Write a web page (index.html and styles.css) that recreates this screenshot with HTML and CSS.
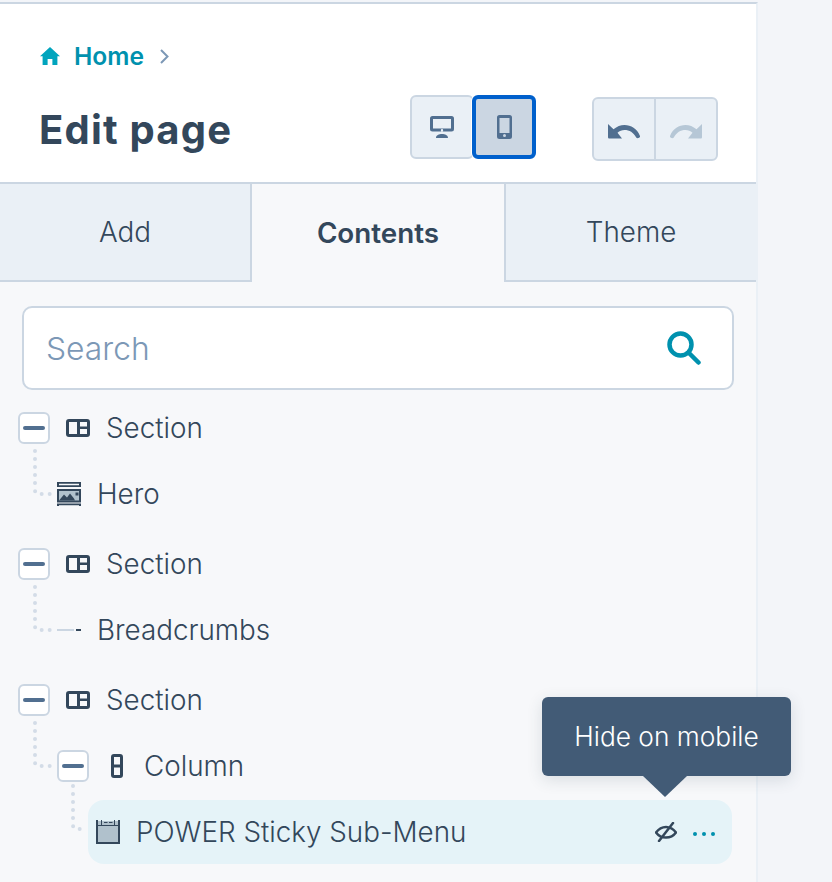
FILE: index.html
```html
<!DOCTYPE html>
<html lang="en">
<head>
<meta charset="utf-8">
<title>Edit page</title>
<link rel="stylesheet" href="styles.css">
</head>
<body>
<div class="panel">
  <header class="head">
    <nav class="crumb">
      <svg class="home-ico" viewBox="0 0 20 18"><path d="M10 0 20 9.2h-2.6V18h-5v-6H7.600v6h-5V9.200H0z"/></svg>
      <a class="home-link">Home</a>
      <svg class="chev" viewBox="0 0 9 15"><path d="M1 1l6.500 6.500L1 14"/></svg>
    </nav>
    <div class="title-row">
      <h1 class="title">Edit page</h1>
      <div class="device-group">
        <button class="btn btn-desktop"><svg class="ico" viewBox="0 0 24 24"><path fill-rule="evenodd" d="M2.500 1h19A2.500 2.500 0 0 1 24 3.500V14a2.500 2.500 0 0 1-2.500 2.500h-19A2.500 2.500 0 0 1 0 14V3.500A2.500 2.500 0 0 1 2.500 1zM3 4v9.500h18V4zM12 14a1.200 1.200 0 1 0 0 2.400 1.200 1.200 0 0 0 0-2.400zM6 23c0-3 3-4 6-4s6 1 6 4z"/></svg></button>
        <button class="btn btn-active"><svg class="ico-phone" viewBox="0 0 15 24"><path fill-rule="evenodd" d="M2.500 0h10A2.500 2.500 0 0 1 15 2.500v19a2.500 2.500 0 0 1-2.500 2.500h-10A2.500 2.500 0 0 1 0 21.500v-19A2.500 2.500 0 0 1 2.500 0zM2.500 3v15h10V3zM7.500 19a1.500 1.500 0 1 0 0 3 1.500 1.500 0 0 0 0-3z"/></svg></button>
      </div>
      <div class="history-group">
        <button class="hbtn"><svg class="ico-hist" viewBox="0 0 32 16"><path d="M0 0l5.500 5.200C9 2.500 12.500 1 16.500 1 23 1 29 4.500 32 12c.5 1.800-2.800 3-3.800 1.400C25.500 8.500 21.500 6 16.500 6c-2.700 0-5 1-7 2.800L14 14.500H1.500C.5 14.500 0 14 0 13z"/></svg></button>
        <button class="hbtn"><svg class="ico-hist ico-dim" viewBox="0 0 32 16"><path d="M32 0l-5.500 5.200C23 2.500 19.500 1 15.500 1 9 1 3 4.500 0 12c-.5 1.800 2.800 3 3.800 1.400C6.500 8.500 10.500 6 15.500 6c2.700 0 5 1 7 2.800L18 14.500h12.500c1 0 1.500-.5 1.500-1.500z"/></svg></button>
      </div>
    </div>
  </header>

  <div class="tabs">
    <div class="tab">Add</div>
    <div class="tab tab-on">Contents</div>
    <div class="tab tab-last">Theme</div>
  </div>

  <div class="body">
    <div class="search">
      <span class="search-ph">Search</span>
      <svg class="search-ico" viewBox="0 0 34 34"><circle cx="13.500" cy="13.500" r="11" /><path d="M21.500 21.500 31.500 31.500"/></svg>
    </div>

    <div class="tree">
      <section class="group">
        <div class="row">
          <span class="toggle"></span>
          <svg class="sec-ico" viewBox="0 0 24 18"><path fill-rule="evenodd" d="M3 0h18a3 3 0 0 1 3 3v12a3 3 0 0 1-3 3H3a3 3 0 0 1-3-3V3a3 3 0 0 1 3-3zM3 3v12h8V3zm11 0v4.500h7V3zm0 7v5h7v-5z"/></svg>
          <span class="label">Section</span>
        </div>
        <div class="row row-leaf">
          <svg class="link" viewBox="0 0 24 50"><path d="M2 2V41Q2 45 6 45H24"/></svg>
          <svg class="mod-ico" viewBox="0 0 24 24"><path fill-rule="evenodd" d="M0 0h24v5H0zM2 1.700v1.600h20V1.700zM0 7h24v13.500H0zM0 21.500h24V24h-2v-.8H2v.8H0z"/><path class="hero-fill" d="M2 9h20v9.500H2z"/><path class="hero-mtn" d="M2 18.500l5-6 3 3 3-4 4 5 1 2zM18.500 10.500h3v3h-3z"/></svg>
          <span class="label">Hero</span>
        </div>
      </section>

      <section class="group">
        <div class="row">
          <span class="toggle"></span>
          <svg class="sec-ico" viewBox="0 0 24 18"><path fill-rule="evenodd" d="M3 0h18a3 3 0 0 1 3 3v12a3 3 0 0 1-3 3H3a3 3 0 0 1-3-3V3a3 3 0 0 1 3-3zM3 3v12h8V3zm11 0v4.500h7V3zm0 7v5h7v-5z"/></svg>
          <span class="label">Section</span>
        </div>
        <div class="row row-leaf">
          <svg class="link" viewBox="0 0 24 50"><path d="M2 2V41Q2 45 6 45H24"/></svg>
          <span class="crumb-ico"></span>
          <span class="label">Breadcrumbs</span>
        </div>
      </section>

      <section class="group">
        <div class="row">
          <span class="toggle"></span>
          <svg class="sec-ico" viewBox="0 0 24 18"><path fill-rule="evenodd" d="M3 0h18a3 3 0 0 1 3 3v12a3 3 0 0 1-3 3H3a3 3 0 0 1-3-3V3a3 3 0 0 1 3-3zM3 3v12h8V3zm11 0v4.500h7V3zm0 7v5h7v-5z"/></svg>
          <span class="label">Section</span>
        </div>
        <div class="row row-leaf">
          <svg class="link" viewBox="0 0 24 50"><path d="M2 2V41Q2 45 6 45H24"/></svg>
          <span class="toggle"></span>
          <svg class="col-ico" viewBox="0 0 12 24"><path fill-rule="evenodd" d="M3 0h6a3 3 0 0 1 3 3v18a3 3 0 0 1-3 3H3a3 3 0 0 1-3-3V3a3 3 0 0 1 3-3zM3 3v7.500h6V3zm0 10.500V21h6v-7.500z"/></svg>
          <span class="label">Column</span>
        </div>
        <div class="row row-sel">
          <svg class="link link-sel" viewBox="0 0 24 50"><path d="M2 2V41Q2 45 6 45H16"/></svg>
          <svg class="mod-ico" viewBox="0 0 24 24"><path class="sticky-fill" d="M1 1h22v22H1z"/><path fill-rule="evenodd" d="M0 0h2v22h20V0h2v24H0z"/><path d="M2 5h20v1H2zM5 0h1v5H5zM18 0h1v5h-1zM8 2h3.500v1H8zM13 2h3.500v1H13z"/></svg>
          <span class="label">POWER Sticky Sub-Menu</span>
          <span class="row-actions">
            <svg class="eye" viewBox="0 0 22 20"><path d="M1 10.500C4 6.500 7 5 11 5s7 1.500 10 5.500c-3 4-6 5-10 5s-7-1-10-5zM18 1 4 19"/></svg>
            <span class="more"><i></i><i></i><i></i></span>
          </span>
        </div>
      </section>
    </div>

    <div class="tooltip">Hide on mobile</div>
  </div>
</div>
</body>
</html>
```
FILE: styles.css
```css
* { box-sizing: border-box; }
html, body { margin: 0; height: 882px; overflow: hidden; }
body {
  background: #f3f5f9;
  font-family: "Inter", "Liberation Sans", sans-serif;
  color: #33475b;
}
.panel {
  width: 758px;
  height: 882px;
  margin-top: 2px;
  border-top: 2px solid #cbd6e2;
  border-right: 2px solid #eaf0f6;
  display: flex;
  flex-direction: column;
}
.head {
  height: 178px;
  background: #fff;
  padding: 40px 38px 0 40px;
}
.crumb { display: flex; align-items: center; height: 24px; }
.home-ico { width: 20px; height: 18px; fill: #00a4bd; }
.home-link { margin-left: 14px; font-size: 24.6px; font-weight: 600; color: #0091ae; }
.chev { width: 9px; height: 15px; margin-left: 16px; fill: none; stroke: #7c98b6; stroke-width: 2; }
.title-row { display: flex; align-items: flex-start; margin-top: 27px; }
.title { margin: 10px 0 0 -1px; font-size: 40px; line-height: 50px; font-weight: 700; letter-spacing: 1.2px; width: 371px; }
.device-group { display: flex; width: 126px; }
.btn {
  width: 64px;
  height: 64px;
  padding: 0;
  display: flex;
  align-items: center;
  justify-content: center;
  border-radius: 6px;
  border: 2px solid #cbd6e2;
  background: #eaf0f6;
}
.btn-active {
  margin-left: -2px;
  position: relative;
  border: 4px solid #0060cc;
  background: #cbd6e2;
  box-shadow: -1px 0 0 #fff;
}
.ico { width: 24px; height: 24px; fill: #516f90; }
.ico-phone { width: 15px; height: 24px; fill: #516f90; }
.history-group {
  display: flex;
  margin: 2px 0 0 56px;
  width: 126px;
  height: 64px;
  border: 2px solid #cbd6e2;
  border-radius: 6px;
  background: #eaf0f6;
}
.hbtn {
  flex: 1;
  padding: 0;
  border: 0;
  background: none;
  display: flex;
  align-items: center;
  justify-content: center;
}
.hbtn + .hbtn { border-left: 2px solid #cbd6e2; }
.ico-hist { width: 32px; height: 16px; fill: #516f90; margin-top: 6px; }
.ico-dim { fill: #b6c7d6; }
.tabs {
  display: flex;
  height: 100px;
  background: #f7f8fa;
  border-top: 2px solid #cbd6e2;
}
.tab {
  flex: 0 0 252px;
  display: flex;
  align-items: center;
  justify-content: center;
  font-size: 27.8px;
  font-weight: 350;
  background: #eaf0f6;
  border-bottom: 2px solid #cbd6e2;
  border-right: 2px solid #cbd6e2;
}
.tab-on {
  background: #f7f8fa;
  border: 0;
  font-weight: 600;
}
.tab-last { flex: 1; border-right: 0; border-left: 2px solid #cbd6e2; }
.body {
  flex: 1;
  position: relative;
  background: #f7f8fa;
  padding-top: 24px;
}
.search {
  width: 712px;
  height: 84px;
  margin-left: 22px;
  padding: 0 31px 0 22px;
  display: flex;
  align-items: center;
  justify-content: space-between;
  background: #fff;
  border: 2px solid #cbd6e2;
  border-radius: 10px;
}
.search-ph { font-size: 31.8px; font-weight: 300; color: #7c98b6; }
.search-ico { width: 34px; height: 34px; fill: none; stroke: #0091ae; stroke-width: 4.5; stroke-linecap: round; }
.tree { margin-top: 5px; }
.group + .group { margin-top: 4px; }
.row {
  height: 66px;
  position: relative;
  display: flex;
  align-items: center;
  padding-left: 18px;
}
.row-leaf { padding-left: 57px; }
.row-sel {
  height: 64px;
  margin: 1px 24px 0 88px;
  padding: 0 16px 0 8px;
  background: #e5f3f8;
  border-radius: 16px;
}
.toggle {
  width: 32px;
  height: 32px;
  flex: none;
  position: relative;
  border: 2px solid #cbd6e2;
  border-radius: 6px;
  background: #fff;
  display: flex;
  align-items: center;
  justify-content: center;
}
.toggle::after {
  content: "";
  width: 22px;
  height: 4px;
  border-radius: 2px;
  background: #516f90;
}
.sec-ico { width: 24px; height: 18px; flex: none; margin-left: 16px; fill: #33475b; }
.mod-ico { width: 24px; height: 24px; flex: none; fill: #33475b; }
.hero-fill, .sticky-fill { fill: #b0c1cc; }
.hero-mtn { fill: #33475b; }
.col-ico { width: 12px; height: 24px; flex: none; margin-left: 22px; fill: #33475b; }
.crumb-ico {
  width: 24px;
  height: 2px;
  flex: none;
  background: linear-gradient(90deg, #cbd6e2 0 72%, transparent 72% 78%, #33475b 78%);
}
.label { font-size: 27.8px; font-weight: 350; margin-left: 16px; white-space: nowrap; }
.col-ico + .label { margin-left: 21px; }
.link {
  position: absolute;
  left: 33px;
  top: -12px;
  width: 24px;
  height: 50px;
  fill: none;
  stroke: #d3dce7;
  stroke-width: 4;
  stroke-linecap: round;
  stroke-dasharray: 0 8;
}
.link-sel { left: -17px; top: -16px; }
.row-actions { margin-left: auto; display: flex; align-items: center; gap: 16px; margin-right: 1px; }
.eye { width: 22px; height: 20px; fill: none; stroke: #33475b; stroke-width: 2.5; stroke-linecap: round; }
.more { display: flex; gap: 4.5px; margin-top: 4px; }
.more i { width: 4.5px; height: 4.5px; border-radius: 50%; background: #0091ae; }
.tooltip {
  position: absolute;
  left: 542px;
  top: 415px;
  width: 249px;
  height: 79px;
  display: flex;
  align-items: center;
  justify-content: center;
  color: #fff;
  font-size: 26.3px;
  font-weight: 350;
  background: #425b76;
  border-radius: 6px;
  box-shadow: 0 4px 16px rgba(45, 62, 80, .14);
}
.tooltip::after {
  content: "";
  position: absolute;
  left: 101px;
  top: 79px;
  border-left: 22px solid transparent;
  border-right: 22px solid transparent;
  border-top: 21px solid #425b76;
}
```
